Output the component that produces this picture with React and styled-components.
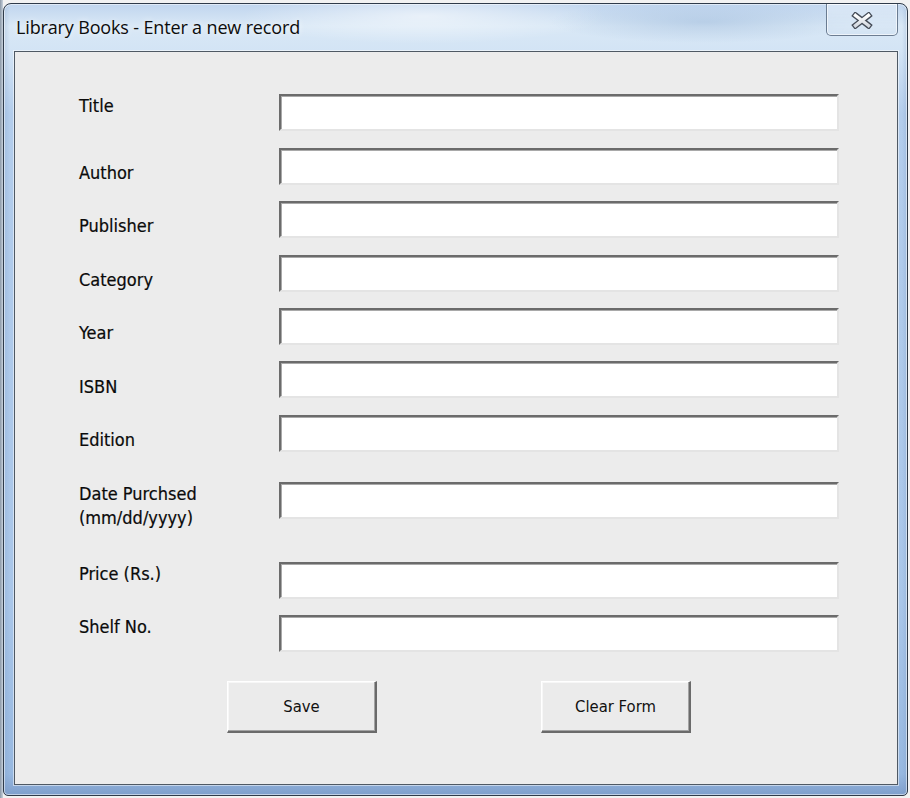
import React from "react";
import styled, { createGlobalStyle } from "styled-components";

const Global = createGlobalStyle`
  html, body { margin: 0; padding: 0; }
  body {
    background: #f2f2f2;
    width: 910px;
    height: 798px;
    overflow: hidden;
  }
  #root { width: 910px; height: 798px; }
`;

const Screen = styled.div`
  width: 910px;
  height: 798px;
  box-sizing: border-box;
  padding: 3px 2px 2px 3px;
  background: linear-gradient(to right, #8a97a6 0, #c9d3de 3px, #f2f2f2 3px);
`;

const Window = styled.div`
  box-sizing: border-box;
  width: 905px;
  height: 793px;
  border: 1px solid #2f3b4a;
  border-radius: 8px 8px 5px 5px;
  display: flex;
  flex-direction: column;
  box-shadow: inset 0 0 0 1px rgba(255, 255, 255, 0.5);
  background:
    radial-gradient(ellipse 260px 40px at 420px 12px, rgba(255,255,255,0.55), rgba(255,255,255,0) 70%),
    radial-gradient(ellipse 220px 30px at 700px 18px, rgba(150,180,215,0.45), rgba(150,180,215,0) 70%),
    linear-gradient(to right, rgba(120,150,190,0.25) 0, rgba(120,150,190,0) 6px, rgba(120,150,190,0) 898px, rgba(120,150,190,0.25) 100%),
    linear-gradient(to bottom, #c0d5ee 0, #d9e8f6 22px, #d3e4f5 47px, #b3cdec 110px, #a9c6e9 600px, #97b8e0 770px, #7f9fcc 100%);
`;

const TitleBar = styled.div`
  height: 47px;
  display: flex;
  align-items: flex-start;
  flex-shrink: 0;
`;

const Title = styled.div`
  margin: 11px 0 0 12px;
  font-family: "Open Sans", "Noto Sans", sans-serif;
  font-size: 18px;
  line-height: 24px;
  color: #0c0c0c;
  letter-spacing: -0.15px;
  text-shadow: 0 0 6px rgba(255, 255, 255, 0.9);
`;

const CloseButton = styled.div`
  margin-left: auto;
  margin-right: 9px;
  width: 72px;
  height: 32px;
  box-sizing: border-box;
  border: 1px solid rgba(70, 88, 112, 0.75);
  border-top: none;
  border-radius: 0 0 5px 5px;
  background: linear-gradient(to bottom, rgba(235, 243, 251, 0.55), rgba(205, 222, 240, 0.35));
  box-shadow: inset 0 0 0 1px rgba(255, 255, 255, 0.6);
  display: flex;
  align-items: center;
  justify-content: center;
  padding-top: 1px;
`;

const Client = styled.div`
  box-sizing: border-box;
  margin: 0 9px 0 10px;
  width: 884px;
  height: 734px;
  border: 1px solid #4f5964;
  background: #ececec;
  box-shadow: 0 0 0 1px rgba(255, 255, 255, 0.5);
  display: flex;
  flex-direction: column;
  padding: 42px 0 0 64px;
`;

const Row = styled.div`
  display: grid;
  grid-template-columns: 200px 560px;
  height: 37px;
  margin-top: ${(p) => p.$gap}px;
`;

const Label = styled.div`
  padding-top: ${(p) => p.$offset}px;
  font-family: "DejaVu Sans Condensed", "DejaVu Sans", sans-serif;
  font-size: 18px;
  line-height: 24px;
  color: #0a0a0a;
  white-space: nowrap;
  -webkit-text-stroke: 0.2px #0a0a0a;
`;

const Field = styled.input`
  box-sizing: border-box;
  width: 560px;
  height: 37px;
  margin: 0;
  padding: 0 4px;
  background: #fff;
  border-style: solid;
  border-width: 2px 2px 2px 2px;
  border-color: #6b6b6b #e4e4e4 #e4e4e4 #6b6b6b;
  box-shadow: inset 1px 1px 0 #a9a9a9;
  outline: none;
  font-family: "DejaVu Sans Condensed", "DejaVu Sans", sans-serif;
  font-size: 16px;
`;

const ButtonBar = styled.div`
  display: flex;
  gap: 164px;
  margin-top: 29px;
  padding-left: 148px;
`;

const Button = styled.button`
  box-sizing: border-box;
  width: 150px;
  height: 52px;
  margin: 0;
  padding: 0;
  background: #ebebeb;
  border-style: solid;
  border-width: 1px 2px 2px 1px;
  border-color: #ffffff #6a6a6a #6a6a6a #ffffff;
  box-shadow: inset -1px -1px 0 #a3a3a3, inset 1px 1px 0 #f7f7f7;
  font-family: "DejaVu Sans Condensed", "DejaVu Sans", sans-serif;
  font-size: 16.5px;
  color: #111;
  cursor: default;
`;

const fields = [
  { label: "Title", gap: 0, offset: 0 },
  { label: "Author", gap: 17, offset: 13 },
  { label: "Publisher", gap: 16, offset: 13 },
  { label: "Category", gap: 17, offset: 13 },
  { label: "Year", gap: 16, offset: 13 },
  { label: "ISBN", gap: 16, offset: 14 },
  { label: "Edition", gap: 17, offset: 13 },
  { label: ["Date Purchsed", "(mm/dd/yyyy)"], gap: 30, offset: 0 },
  { label: "Price (Rs.)", gap: 43, offset: 0 },
  { label: "Shelf No.", gap: 16, offset: 0 },
];

function CloseGlyph() {
  return (
    <svg width="22" height="17" viewBox="0 0 22 17">
      <defs>
        <linearGradient id="xg" x1="0" y1="0" x2="0" y2="1">
          <stop offset="0" stopColor="#ffffff" />
          <stop offset="1" stopColor="#d6dbe2" />
        </linearGradient>
      </defs>
      <g strokeLinecap="square">
        <path d="M4.5 3.5 L17.5 13.5 M17.5 3.5 L4.5 13.5" stroke="#454c57" strokeWidth="6" />
        <path d="M4.5 3.5 L17.5 13.5 M17.5 3.5 L4.5 13.5" stroke="url(#xg)" strokeWidth="3.4" />
      </g>
    </svg>
  );
}

export default function App() {
  return (
    <>
      <Global />
      <Screen>
        <Window>
          <TitleBar>
            <Title>Library Books - Enter a new record</Title>
            <CloseButton>
              <CloseGlyph />
            </CloseButton>
          </TitleBar>
          <Client>
            {fields.map((f, i) => (
              <Row key={i} $gap={f.gap}>
                <Label $offset={f.offset}>
                  {Array.isArray(f.label)
                    ? f.label.map((l, j) => <div key={j}>{l}</div>)
                    : f.label}
                </Label>
                <Field type="text" />
              </Row>
            ))}
            <ButtonBar>
              <Button>Save</Button>
              <Button>Clear Form</Button>
            </ButtonBar>
          </Client>
        </Window>
      </Screen>
    </>
  );
}
